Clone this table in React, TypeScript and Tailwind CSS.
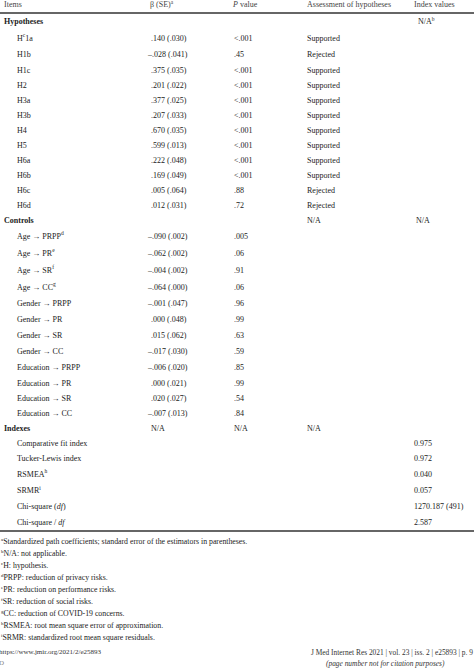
type Cell = React.ReactNode

interface RowProps {
  h: string
  items: Cell
  beta?: Cell
  p?: Cell
  assess?: Cell
  index?: Cell
  sub?: boolean
  bold?: boolean
}

const cols = "grid grid-cols-[144px_85px_74px_107px_1fr] items-center pl-[4px]"

function Sup({ children }: { children: React.ReactNode }) {
  return <sup className="text-[5.5px] top-[-0.55em]">{children}</sup>
}

function Beta({ v }: { v: string }) {
  const neg = v.startsWith("–")
  return <span className={neg ? "" : "pl-[3px]"}>{v}</span>
}

function Row({ h, items, beta, p, assess, index, sub, bold }: RowProps) {
  return (
    <div className={`${cols} ${h}`}>
      <div className={`${sub ? "pl-[13px]" : ""} ${bold ? "font-bold" : ""}`}>{items}</div>
      <div>{typeof beta === "string" ? <Beta v={beta} /> : beta}</div>
      <div className="pl-[1px]">{p}</div>
      <div>{assess}</div>
      <div>{index}</div>
    </div>
  )
}

const hyps: [string, string, string, string][] = [
  ["H1b", "–.028 (.041)", ".45", "Rejected"],
  ["H1c", ".375 (.035)", "<.001", "Supported"],
  ["H2", ".201 (.022)", "<.001", "Supported"],
  ["H3a", ".377 (.025)", "<.001", "Supported"],
  ["H3b", ".207 (.033)", "<.001", "Supported"],
  ["H4", ".670 (.035)", "<.001", "Supported"],
  ["H5", ".599 (.013)", "<.001", "Supported"],
  ["H6a", ".222 (.048)", "<.001", "Supported"],
  ["H6b", ".169 (.049)", "<.001", "Supported"],
  ["H6c", ".005 (.064)", ".88", "Rejected"],
  ["H6d", ".012 (.031)", ".72", "Rejected"],
]

const ageRows: [string, string, string, string][] = [
  ["PRPP", "d", "–.090 (.002)", ".005"],
  ["PR", "e", "–.062 (.002)", ".06"],
  ["SR", "f", "–.004 (.002)", ".91"],
  ["CC", "g", "–.064 (.000)", ".06"],
]

const otherControls: [string, string, string][] = [
  ["Gender → PRPP", "–.001 (.047)", ".96"],
  ["Gender → PR", ".000 (.048)", ".99"],
  ["Gender → SR", ".015 (.062)", ".63"],
  ["Gender → CC", "–.017 (.030)", ".59"],
  ["Education → PRPP", "–.006 (.020)", ".85"],
  ["Education → PR", ".000 (.021)", ".99"],
  ["Education → SR", ".020 (.027)", ".54"],
  ["Education → CC", "–.007 (.013)", ".84"],
]

const footnotes: [string, string][] = [
  ["a", "Standardized path coefficients; standard error of the estimators in parentheses."],
  ["b", "N/A: not applicable."],
  ["c", "H: hypothesis."],
  ["d", "PRPP: reduction of privacy risks."],
  ["e", "PR: reduction on performance risks."],
  ["f", "SR: reduction of social risks."],
  ["g", "CC: reduction of COVID-19 concerns."],
  ["h", "RSMEA: root mean square error of approximation."],
  ["i", "SRMR: standardized root mean square residuals."],
]

export default function App() {
  return (
    <div className="w-[474px] h-[668px] overflow-hidden bg-white font-['Liberation_Serif',serif] text-[8px] leading-none text-[#222] whitespace-nowrap">
      {/* header */}
      <div className={`${cols} h-[14px] border-b-2 border-[#666] text-[#444] pb-[2px]`}>
        <div>Items</div>
        <div className="pl-[2px]">
          β (SE)<Sup>a</Sup>
        </div>
        <div>
          <i>P</i> value
        </div>
        <div>Assessment of hypotheses</div>
        <div>Index values</div>
      </div>

      <Row h="h-[16px]" bold items="Hypotheses" index={<span className="pl-[4px]">N/A<Sup>b</Sup></span>} />
      <Row
        h="h-[17px]"
        sub
        items={<span>H<Sup>c</Sup>1a</span>}
        beta=".140 (.030)"
        p="<.001"
        assess="Supported"
      />
      {hyps.map(([n, b, p, a], i) => (
        <Row key={n} h={i === 0 ? "h-[16px]" : "h-[15px]"} sub items={n} beta={b} p={p} assess={a} />
      ))}

      <Row h="h-[15px]" bold items="Controls" assess="N/A" index={<span className="pl-[2px]">N/A</span>} />
      {ageRows.map(([t, s, b, p]) => (
        <Row
          key={t}
          h="h-[17px]"
          sub
          items={
            <span>
              Age → {t}
              <Sup>{s}</Sup>
            </span>
          }
          beta={b}
          p={p}
        />
      ))}
      {otherControls.map(([t, b, p], i) => (
        <Row key={t} h={i < 5 ? "h-[16px]" : "h-[15px]"} sub items={t} beta={b} p={p} />
      ))}

      <Row
        h="h-[15px]"
        bold
        items="Indexes"
        beta={<span className="pl-[3px]">N/A</span>}
        p="N/A"
        assess="N/A"
      />
      <Row h="h-[15px]" sub items="Comparative fit index" index="0.975" />
      <Row h="h-[15px]" sub items="Tucker-Lewis index" index="0.972" />
      <Row h="h-[17px]" sub items={<span>RSMEA<Sup>h</Sup></span>} index="0.040" />
      <Row h="h-[16px]" sub items={<span>SRMR<Sup>i</Sup></span>} index="0.057" />
      <Row h="h-[16px]" sub items={<span>Chi-square (<i>df</i>)</span>} index="1270.187 (491)" />
      <div className={`${cols} h-[17px] border-b-2 border-[#666]`}>
        <div className="pl-[13px]">
          Chi-square / <i>df</i>
        </div>
        <div />
        <div />
        <div />
        <div>2.587</div>
      </div>

      {/* footnotes */}
      <div className="pt-[4px] pl-[1px] text-[7.8px] leading-[12px]">
        {footnotes.map(([k, t]) => (
          <div key={k}>
            <sup className="text-[5px] top-[-0.6em]">{k}</sup>
            {t}
          </div>
        ))}
      </div>

      {/* page footer */}
      <div className="mt-[3px] flex leading-[11px] text-[#333]">
        <div className="w-[312px] shrink-0 -ml-[1px] text-[7px]">
          <div>https://www.jmir.org/2021/2/e25893</div>
          <div className="text-[#888]">D</div>
        </div>
        <div className="text-[7.4px]">
          <div>J Med Internet Res 2021 | vol. 23 | iss. 2 | e25893 | p. 9</div>
          <div className="pl-[15px] italic">(page number not for citation purposes)</div>
        </div>
      </div>
    </div>
  )
}
